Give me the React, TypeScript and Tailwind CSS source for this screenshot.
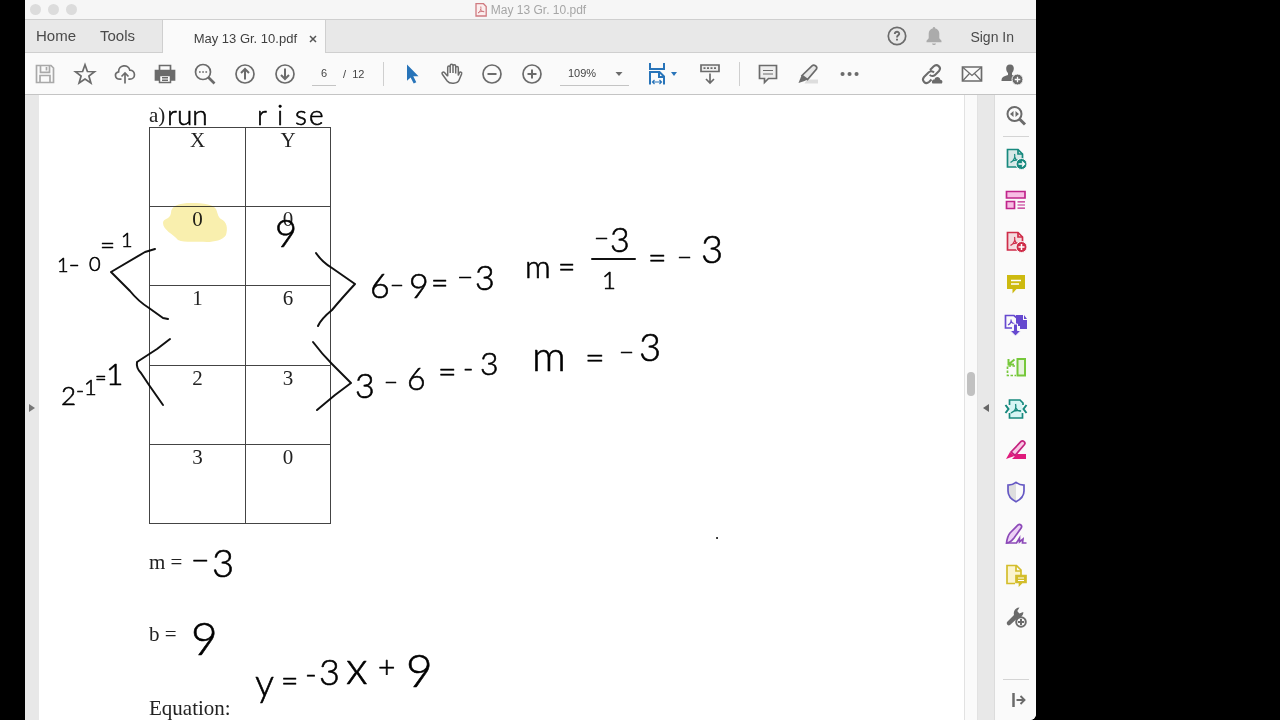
import type { ReactNode } from 'react';

type IconProps = { children: ReactNode; className?: string };

function Icon({ children, className = 'text-[#6b6b6b]' }: IconProps) {
  return (
    <svg
      className={`h-6 w-6 shrink-0 ${className}`}
      viewBox="0 0 24 24"
      fill="none"
      stroke="currentColor"
      strokeWidth="1.7"
      aria-hidden="true"
    >
      {children}
    </svg>
  );
}

function ToolButton({ label, children, className }: IconProps & { label: string }) {
  return (
    <button type="button" aria-label={label} className="flex h-10 w-10 shrink-0 items-center justify-center">
      <Icon className={className}>{children}</Icon>
    </button>
  );
}

function TitleBar() {
  return (
    <div className="relative flex h-5 shrink-0 items-center justify-center border-b border-[#cfcfcf] bg-[#f6f6f6]">
      <div className="absolute top-1 left-[5px] flex gap-[7px]">
        <span className="h-[11px] w-[11px] rounded-full bg-[#dcdcdc]" />
        <span className="h-[11px] w-[11px] rounded-full bg-[#dcdcdc]" />
        <span className="h-[11px] w-[11px] rounded-full bg-[#dcdcdc]" />
      </div>
      <svg className="mr-1 h-[14px] w-3" viewBox="0 0 12 14" fill="#fbeeee" stroke="#cf7a80" aria-hidden="true">
        <path d="M1 .7h7.5L11.2 3.500v9.500H1z" strokeWidth="1.300" />
        <path d="M3 10c2-1 3.500-4 2.800-6.500M5.500 6c.8 2 2 3 3.800 2.700M3 10c1.500-1.500 4-2 6-1.500" fill="none" />
      </svg>
      <span className="text-[12px] leading-4 text-[#a6a6a6]">May 13 Gr. 10.pdf</span>
    </div>
  );
}

function TabBar() {
  return (
    <div className="flex h-[33px] shrink-0 bg-[#e8e8e8] text-[#4a4a4a]">
      <nav className="flex w-[138px] items-center gap-6 border-r border-b border-[#cfcfcf] pl-[11px] text-[15px]">
        <a href="#home">Home</a>
        <a href="#tools">Tools</a>
      </nav>
      <div className="flex w-[162px] items-center justify-end gap-3 bg-[#fafafa] pt-1 pr-2 text-[13px] text-[#3f3f3f]">
        <span>May 13 Gr. 10.pdf</span>
        <button type="button" aria-label="Close tab">
          <svg className="h-2 w-2" viewBox="0 0 8 8" stroke="#555" strokeWidth="1.500" aria-hidden="true">
            <path d="M1 1l6 6M7 1L1 7" />
          </svg>
        </button>
      </div>
      <div className="flex flex-1 items-center justify-end border-b border-l border-[#cfcfcf] pr-[22px]">
        <button type="button" aria-label="Help" className="mr-[13px]">
          <Icon>
            <circle cx="12" cy="12" r="8.700" />
            <path d="M9.800 10c0-3 4.600-2.800 4.400-.1-.1 1.500-2.200 1.500-2.200 3.500M12 14.800v1.700" strokeWidth="1.900" />
          </Icon>
        </button>
        <button type="button" aria-label="Notifications" className="mr-6">
          <Icon className="text-[#ababab]">
            <path
              d="M4.500 18.200v-1.400l2.200-2.500V9.500c0-2.800 1.700-4.600 4-5.100 0-2 2.600-2 2.600 0 2.300.5 4 2.300 4 5.100v4.800l2.200 2.500v1.400zM10 19.500h4c-.5 2-3.500 2-4 0z"
              fill="currentColor"
              stroke="none"
            />
          </Icon>
        </button>
        <button type="button" className="pt-[2px] text-[14px]">
          Sign In
        </button>
      </div>
    </div>
  );
}

function Toolbar() {
  return (
    <div className="flex h-[42px] shrink-0 items-center border-b border-[#c4c4c4] bg-[#fafafa] pr-1 text-[11px] text-[#444]">
      <ToolButton label="Save" className="text-[#a9a9a9]">
        <path d="M3.500 3.500H18l2.500 2.500v14.500h-17zM7.500 3.500v6.800h9V3.500M13.500 5v3.500M7 20.500v-7h10v7" />
      </ToolButton>
      <ToolButton label="Star">
        <path d="M12 2.800l2.400 6.700 7.100.2-5.600 4.400 2 6.900-5.900-4-5.900 4 2-6.900-5.600-4.400 7.100-.2z" />
      </ToolButton>
      <ToolButton label="Upload">
        <path d="M8.500 17.200H7c-5.500 0-6-6.500-1.400-7.400C5.300 2.800 15.500 1.500 16.800 8.200c6.200-.2 6.200 9 0 9h-1.500M12 21.500v-10M8.500 14.500L12 11l3.500 3.500" />
      </ToolButton>
      <ToolButton label="Print">
        <path d="M6.500 8V3.500h11V8" />
        <path d="M2.500 8.500h19V18H18v-4H6v4H2.500z" fill="currentColor" />
        <path d="M6.500 13.500h11v7h-11zM9 15.800h6M9 18.200h6" fill="#fff" strokeWidth="1.500" />
      </ToolButton>
      <ToolButton label="Find">
        <circle cx="10" cy="10" r="7.500" />
        <path d="M15.500 15.500l6 6" strokeWidth="2.600" />
        <path d="M6 10h1.700M9.200 10h1.700M12.400 10h1.700" />
      </ToolButton>
      <ToolButton label="Previous page">
        <circle cx="12" cy="12" r="9" />
        <path d="M12 17.500V7M8 11l4-4 4 4" strokeWidth="2" />
      </ToolButton>
      <ToolButton label="Next page">
        <circle cx="12" cy="12" r="9" />
        <path d="M12 6.500V17M8 13l4 4 4-4" strokeWidth="2" />
      </ToolButton>
      <input
        aria-label="Page number"
        defaultValue="6"
        className="ml-[7px] h-6 w-6 border-b border-[#c4c4c4] bg-transparent text-center outline-none"
      />
      <span className="ml-[7px] w-10 pt-[2px]">/&nbsp; 12</span>
      <span className="mr-2 h-6 w-px bg-[#cfcfcf]" />
      <ToolButton label="Select" className="text-[#2874b9]">
        <path d="M7 2.500v16.200l3.600-3.300 3.100 6.200 2.600-1.300-3-6h5.200z" fill="currentColor" stroke="none" />
      </ToolButton>
      <ToolButton label="Hand">
        <path
          d="M7.700 14.200V5.500c0-2 2.500-2 2.500 0V11M10.200 9V3.800c0-2 2.800-2 2.800 0V11M13 9V4.200c0-2 2.700-2 2.700 0V11.500M15.700 9V6c0-2 2.600-2 2.600 0v7.500l1-2.500c.8-1.700 3-1 2.300 1l-2.700 6.500c-1.300 3-9 4-11.700.5L2.500 12.500c-1.400-2 .8-3.200 2.200-1.700l3 3.400"
          strokeWidth="1.500"
        />
      </ToolButton>
      <ToolButton label="Zoom out">
        <circle cx="12" cy="12" r="9" />
        <path d="M7.500 12h9" strokeWidth="2" />
      </ToolButton>
      <ToolButton label="Zoom in">
        <circle cx="12" cy="12" r="9" />
        <path d="M7.500 12h9M12 7.500v9" strokeWidth="2" />
      </ToolButton>
      <div className="relative ml-2">
        <select
          aria-label="Zoom level"
          defaultValue="109%"
          className="h-6 w-[69px] appearance-none border-b border-[#c4c4c4] bg-transparent pl-2 outline-none"
        >
          <option>100%</option>
          <option>109%</option>
          <option>125%</option>
        </select>
        <svg className="pointer-events-none absolute top-[10px] right-[6px] h-1 w-2" viewBox="0 0 8 4" fill="#6b6b6b" aria-hidden="true">
          <path d="M.5 0h7L4 4z" />
        </svg>
      </div>
      <button type="button" aria-label="Fit width" className="ml-4 flex items-center gap-px text-[#2874b9]">
        <Icon className="text-[#2874b9]">
          <path d="M5 1v6h14V1M5 22.500V10h9.500l4.500 4.500v8M14 10v5h5" strokeWidth="2" />
          <path d="M7.500 20h9M9.500 18l-2 2 2 2M14.500 18l2 2-2 2" strokeWidth="1.200" />
        </Icon>
        <svg className="h-1 w-2" viewBox="0 0 8 4" fill="currentColor" aria-hidden="true">
          <path d="M1 0h6L4 4z" />
        </svg>
      </button>
      <span className="w-3" />
      <ToolButton label="Read mode">
        <path d="M3 3h18v6.500H3z" fill="#eee" />
        <path d="M5.500 6.200h13" strokeDasharray="2 1.500" />
        <path d="M12 11.500V21M8 17l4 4 4-4" />
      </ToolButton>
      <span className="mr-2 ml-[9px] h-6 w-px bg-[#cfcfcf]" />
      <ToolButton label="Comment">
        <path d="M3.500 3.500h17v13h-8L8.500 20.500v-4h-5z" fill="#eee" />
        <path d="M7 8.500h10M7 12h10" strokeWidth="1.200" />
      </ToolButton>
      <ToolButton label="Highlight">
        <path d="M11 17.500h11v4H8.500z" fill="#ddd" stroke="none" />
        <path d="M6 13.500L16 3.800c2-1.800 5.800.5 4.500 3.200L11.500 17.500z" fill="#e8e8e8" />
        <path d="M5.500 13.500l6 4-3 1.500-6 2z" fill="currentColor" stroke="none" />
      </ToolButton>
      <ToolButton label="More tools">
        <path d="M6.500 12h.1M13.500 12h.1M20.500 12h.1" strokeWidth="4" strokeLinecap="round" />
      </ToolButton>
      <span className="flex-1" />
      <ToolButton label="Share link">
        <path
          d="M10 8l3.500-3.500c3.500-3.500 8.500 1 5.500 4.500l-4 4c-1.500 1.500-4 1.500-5.200-.3M14 10.500c-1.500-1.800-4-1.500-5.500 0L4 15c-3 3.500 1.500 8 5 5l2.500-2.500"
          strokeWidth="2"
        />
        <path d="M12.500 21.500c-1.500-2 .2-4.300 2-4 1-3.500 5.500-3 5.800.3 2.500.2 2.500 2.800 1.500 3.700z" fill="currentColor" stroke="none" />
      </ToolButton>
      <ToolButton label="Email">
        <path d="M2.500 5h19v14h-19z" />
        <path d="M3 5.500l9 8 9-8M3 18.500l6.500-7M21 18.500l-6.500-7" strokeWidth="1.200" />
      </ToolButton>
      <ToolButton label="Add people">
        <path
          d="M10 2.500c2.800 0 4 2 3.800 4.300-.2 2-.8 3-1.800 4.200v2l3.500 1.300-2 4.700H1.500c0-4 2-4.500 6.500-6v-2C7 10 6.300 9 6.200 6.800 6 4.500 7.200 2.500 10 2.500z"
          fill="currentColor"
          stroke="none"
        />
        <circle cx="17.500" cy="17.500" r="5.500" fill="currentColor" stroke="#fafafa" strokeWidth="1" />
        <path d="M14.700 17.500h5.600M17.500 14.700v5.600" stroke="#fafafa" strokeWidth="1.300" />
      </ToolButton>
    </div>
  );
}

// One token of the teacher's pen notes: text, x, baseline, size
type Token = [string, number, number, number];

const notes: Token[][] = [
  [['run', 167, 125, 28]],
  [['r', 257, 125, 28], ['i', 277, 125, 28], ['s', 295, 125, 28], ['e', 309, 125, 28]],
  [['9', 275, 247, 38]],
  [['1', 57, 272, 20], ['−', 69, 271, 18], ['0', 89, 271, 20], ['=', 100, 254, 26], ['1', 121, 247, 20]],
  [['2', 61, 405, 26], ['-', 76, 398, 22], ['1', 84, 395, 22], ['=', 95, 385, 20], ['1', 106, 385, 30]],
  [['6', 370, 298, 34], ['−', 390, 293, 24], ['9', 409, 298, 34], ['=', 431, 293, 30], ['−', 457, 287, 28], ['3', 475, 290, 34]],
  [['m', 525, 278, 32], ['=', 558, 277, 30], ['−', 594, 247, 26], ['3', 610, 252, 34], ['1', 602, 289, 24]],
  [['=', 648, 269, 32], ['−', 677, 266, 26], ['3', 701, 263, 38]],
  [['3', 355, 398, 34], ['−', 384, 390, 24], ['6', 407, 390, 32], ['=', 438, 383, 32], ['-', 463, 378, 28], ['3', 480, 375, 32]],
  [['m', 532, 371, 42], ['=', 585, 369, 34], ['−', 619, 361, 26], ['3', 639, 361, 38]],
  [['−', 191, 571, 32], ['3', 212, 577, 38]],
  [['9', 191, 655, 46]],
  [['y', 255, 696, 38], ['=', 281, 691, 30], ['-', 305, 685, 32], ['3', 319, 685, 36], ['x', 346, 684, 46], ['+', 378, 678, 30], ['9', 406, 687, 46]],
];

function InkLayer() {
  return (
    <svg className="pointer-events-none absolute inset-0 h-full w-full mix-blend-multiply" fill="none" stroke="#111" strokeWidth="2" strokeLinecap="round" strokeLinejoin="round">
      <g transform="translate(-39 -95)">
        <path
          d="M163 223C163 218 170 220 171 213C171 206 178 204 187 203C198 203 212 203 216 209C218 214 218 217 221 219C227 222 228 228 226 235C223 240 214 242 207 242C197 241 185 243 178 240C173 234 163 230 163 223Z"
          fill="#f9efae"
          stroke="none"
        />
        <path d="M155 249L145 252L111 272L130 291Q138 301 149 308L163 318L168 319" />
        <path d="M170 339L157 349L137 362Q136 368 141 373L149 385L163 405" />
        <path d="M316 253Q322 262 332 268L355 284Q342 298 332 310Q321 319 318 326" />
        <path d="M313 342Q322 354 332 364L351 383L335 395L317 410" />
        <path d="M592 259H635M717 538h.1" />
        {notes.map((note, i) => (
          <text key={i} fill="#000" stroke="#000" strokeWidth="0.6" className="font-['Lato','Open_Sans',sans-serif] font-light">
            {note.map(([text, x, y, size], j) => (
              <tspan key={j} x={x} y={y} fontSize={size}>
                {text}
              </tspan>
            ))}
          </text>
        ))}
      </g>
    </svg>
  );
}

const rows = [
  ['0', '0'],
  ['1', '6'],
  ['2', '3'],
  ['3', '0'],
];

function Page() {
  return (
    <main className="relative min-w-0 flex-1 overflow-hidden bg-white pt-2 pl-[110px] font-['Liberation_Serif',serif] text-[21px] leading-6 text-[#222]">
      <p>a)</p>
      <table className="h-[397px] w-[182px] table-fixed border-collapse text-center">
        <colgroup>
          <col className="w-24" />
          <col />
        </colgroup>
        <thead>
          <tr className="h-[79px]">
            <th className="border border-[#444] p-0 align-top font-normal">X</th>
            <th className="border border-[#444] p-0 align-top font-normal">Y</th>
          </tr>
        </thead>
        <tbody>
          {rows.map(([x, y]) => (
            <tr key={x} className="h-[79px]">
              <td className="border border-[#444] p-0 align-top">{x}</td>
              <td className="border border-[#444] p-0 align-top">{y}</td>
            </tr>
          ))}
        </tbody>
      </table>
      <p className="mt-[26px]">m =</p>
      <p className="mt-12">b =</p>
      <p className="mt-[50px]">Equation:</p>
      <InkLayer />
    </main>
  );
}

function PdfSheet() {
  return (
    <>
      <path d="M3.500 2.500H14l4.500 4.500v13h-15z" fill="currentColor" fillOpacity="0.15" />
      <path d="M14 2.500V7h4.500" />
      <path d="M6.500 15.500c3-1.500 5-5 4-8.500M10.500 9.500c.8 3 2.500 4.500 5 4M6.500 15.500c2-2.200 5.500-2.800 9-2" strokeWidth="1.200" />
    </>
  );
}

function ToolPane() {
  return (
    <aside className="flex w-[42px] shrink-0 flex-col items-center border-l border-[#dcdcdc] bg-[#fafafa]">
      <ToolButton label="Search tools">
        <circle cx="10.500" cy="11" r="7" strokeWidth="2" />
        <path d="M15.500 16l5.500 5.500" strokeWidth="3" />
        <path d="M9.500 8v6l-3.500-3zM11.500 8v6l3.500-3z" fill="currentColor" stroke="none" />
      </ToolButton>
      <span className="mt-px mb-px h-px w-[26px] bg-[#d4d4d4]" />
      <nav className="grid h-[500px] shrink-0 grid-rows-12 items-center" aria-label="Tools">
        <ToolButton label="Export PDF" className="text-[#17897e]">
          <PdfSheet />
          <circle cx="17.500" cy="17" r="5.500" fill="currentColor" stroke="#fafafa" strokeWidth="1" />
          <path d="M14.500 17h5.500M18 14.500l2.500 2.500-2.500 2.500" stroke="#fff" strokeWidth="1.300" />
        </ToolButton>
        <ToolButton label="Organize pages" className="text-[#c0248b]">
          <path d="M2.500 3.500h18.500v6.500H2.500zM2.500 13.500h8v7h-8z" fill="#f8bde4" />
          <path d="M13.500 13.800H21M13.500 17H21M13.500 20.200H21" strokeWidth="1.200" />
        </ToolButton>
        <ToolButton label="Create PDF" className="text-[#cf2d49]">
          <PdfSheet />
          <circle cx="17.500" cy="17" r="5.500" fill="currentColor" stroke="#fafafa" strokeWidth="1" />
          <path d="M14.500 17h6M17.500 14v6" stroke="#fff" strokeWidth="1.500" />
        </ToolButton>
        <ToolButton label="Comment" className="text-[#cdba10]">
          <path d="M3 3h18v14h-8.500l-4 4.500V17H3z" fill="currentColor" stroke="none" />
          <path d="M7 8.500h10M7 12h8" stroke="#fff" strokeWidth="1.500" />
        </ToolButton>
        <ToolButton label="Combine files" className="text-[#6649cf]">
          <path d="M12 2h7v5h4v9h-7v-3h-4zM20 2l3 4h-3z" fill="currentColor" stroke="none" />
          <path d="M8 15H1.500V2.500H10L13 5v5" />
          <path d="M4 12c2-1 3.500-3 3-5.500 0 2.500 1.500 4 3.500 4" strokeWidth="1.200" />
          <path d="M9.500 11h4v6.500h3.500L11.500 23 6 17.500h3.500z" fill="currentColor" stroke="#fafafa" strokeWidth="1" />
        </ToolButton>
        <ToolButton label="Compare files" className="text-[#76c83b]">
          <path d="M13.500 4H21v16.500h-7.500z" fill="currentColor" fillOpacity="0.15" strokeWidth="2" />
          <path d="M11 11H3.500v9.500H12" strokeDasharray="2.500 1.500" />
          <path d="M10.500 4.500L5 9M4.500 4v5.500H10" strokeWidth="2" />
        </ToolButton>
        <ToolButton label="Compress PDF" className="text-[#17897e]">
          <path d="M5.500 8V3H16l3 3v2M5.500 16v5h13v-5" fill="#d6f5f4" />
          <path d="M5.500 8v8h13V8" fill="#d6f5f4" stroke="none" />
          <path d="M1.500 8l3 4-3 4M22.500 8l-3 4 3 4" strokeWidth="2" />
          <path d="M7 16c3.500-1.500 5.500-5 4.500-9M12 11c1 2.500 2.500 3.500 5 3M7 16c2.500-2.500 6-3 10-2" strokeWidth="1.300" />
        </ToolButton>
        <ToolButton label="Edit PDF" className="text-[#c4227f]">
          <path d="M7 14L17 3.500c2-1.500 5 1 3.500 3L11 17.500z" fill="#f9c8e4" />
          <path d="M6 14l4.500 4-8.500 3zM13 16h9v5H8z" fill="#e01b7c" stroke="none" />
        </ToolButton>
        <ToolButton label="Protect" className="text-[#6558c4]">
          <path d="M12 2.500v19c-4.500-2.500-8-6-8-10.500V5c3 0 5.500-.5 8-2.500z" fill="#dedede" stroke="none" />
          <path d="M12 2.300c2.500 2 5 2.800 8 2.800V11c0 4.500-3.500 8.500-8 10.700C7.500 19.500 4 15.500 4 11V5.100c3 0 5.500-.8 8-2.800z" />
        </ToolButton>
        <ToolButton label="Fill and sign" className="text-[#8c49b8]">
          <path d="M2.500 21c.5-4 1.500-7.500 3.500-10l8-8c2-1.500 4.500.5 3.300 2.800L10 16c-1.500 2-4 4.500-7.500 5z" fill="#ecd0f5" />
          <path d="M2 21h10.500l3-5v4l3.500-3-.5 4h4" />
        </ToolButton>
        <ToolButton label="Send for comments" className="text-[#d3bd2b]">
          <path d="M11 20.500H3v-18h9.500L17 7v5.500M12 2.500V8h5" fill="#fbf4ce" />
          <path d="M12 12.500h10v7h-4L15.500 22v-2.500H12z" fill="currentColor" />
          <path d="M14 15h6M14 17.500h6" stroke="#fff" strokeWidth="1" />
        </ToolButton>
        <ToolButton label="More tools">
          <path
            d="M3.500 16.500L10 10C9 6 11.500 2.500 15.500 2.500L13.300 6l2 2.500 4-1.500c.2 3-2 5.500-5 5.500L6 20c-2 1.500-4.500-1.500-2.500-3.500z"
            fill="currentColor"
            stroke="none"
          />
          <circle cx="17" cy="17" r="4.800" fill="#fafafa" strokeWidth="2" />
          <path d="M14 17h6M17 14v6" strokeWidth="2" />
        </ToolButton>
      </nav>
      <span className="mt-auto h-px w-[26px] bg-[#d4d4d4]" />
      <ToolButton label="Collapse pane">
        <path d="M9.500 5v14" strokeWidth="2.500" />
        <path d="M12.500 12H20M16.500 8l4 4-4 4" strokeWidth="1.900" />
      </ToolButton>
    </aside>
  );
}

export default function App() {
  return (
    <div className="h-screen bg-black pr-[244px] pl-[25px] font-['Liberation_Sans',Arial,sans-serif]">
      <div className="flex h-full flex-col overflow-hidden rounded-br-md bg-[#fafafa]">
        <TitleBar />
        <TabBar />
        <Toolbar />
        <div className="flex min-h-0 flex-1">
          <button type="button" aria-label="Show navigation pane" className="flex w-[14px] shrink-0 items-center justify-center bg-[#e8e8e8]">
            <svg className="h-2 w-[6px]" viewBox="0 0 6 8" fill="#777" aria-hidden="true">
              <path d="M0 0l6 4-6 4z" />
            </svg>
          </button>
          <Page />
          <div className="flex w-[14px] shrink-0 flex-col items-center border-x border-[#e2e2e2] bg-[#fafafa]">
            <span className="basis-[277px]" />
            <span className="h-6 w-2 rounded-full bg-[#c1c1c1]" />
          </div>
          <button type="button" aria-label="Hide tools pane" className="flex w-4 shrink-0 items-center justify-center bg-[#e8e8e8]">
            <svg className="h-2 w-[6px]" viewBox="0 0 6 8" fill="#666" aria-hidden="true">
              <path d="M6 0L0 4l6 4z" />
            </svg>
          </button>
          <ToolPane />
        </div>
      </div>
    </div>
  );
}
